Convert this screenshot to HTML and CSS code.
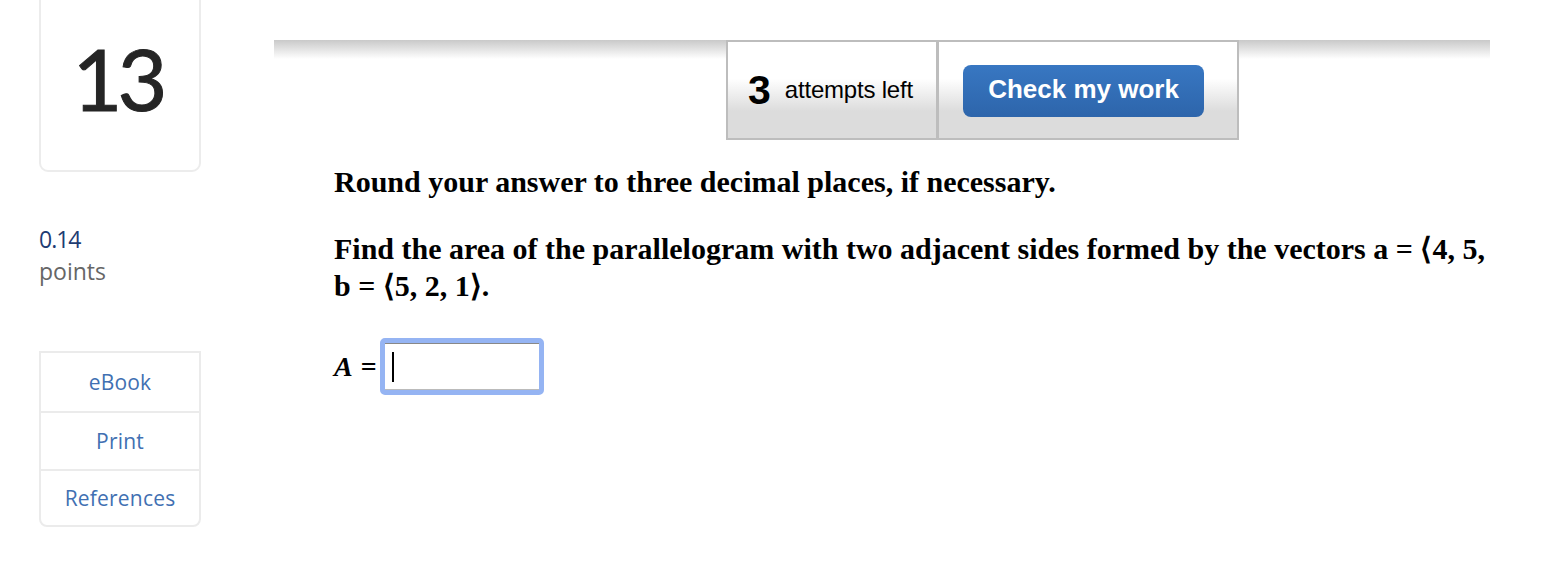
FILE: index.html
```html
<!DOCTYPE html>
<html>
<head>
<meta charset="utf-8">
<link rel="stylesheet" href="styles.css">
</head>
<body>
<div class="page">
  <aside class="side">
    <div class="qnum">13</div>
    <div class="points">
      <div class="pval">0.14</div>
      <div class="plabel">points</div>
    </div>
    <nav class="tools">
      <div class="tool">eBook</div>
      <div class="tool">Print</div>
      <div class="tool">References</div>
    </nav>
  </aside>
  <main class="main">
    <div class="toolbar">
      <div class="tbox attempts"><span class="num">3</span><span class="alabel">attempts left</span></div>
      <div class="tbox check"><button class="checkbtn">Check my work</button></div>
    </div>
    <div class="question">
      <p class="q">Round your answer to three decimal places, if necessary.</p>
      <p class="q">Find the area of the parallelogram with two adjacent sides formed by the vectors a = ⟨4, 5,<br>b = ⟨5, 2, 1⟩.</p>
      <div class="answer"><span class="var">A</span><span class="eq">=</span><span class="input"><span class="caret"></span></span></div>
    </div>
  </main>
</div>
</body>
</html>
```

FILE: styles.css
```css
html, body {
  margin: 0;
  padding: 0;
  background: #fff;
}
.page {
  display: flex;
  align-items: flex-start;
  width: 1548px;
  height: 584px;
  overflow: hidden;
}
.side {
  margin-left: 39px;
  width: 162px;
  display: flex;
  flex-direction: column;
  font-family: "Open Sans", "Noto Sans", sans-serif;
}
.qnum {
  box-sizing: border-box;
  height: 182px;
  margin-top: -10px;
  border: 2px solid #ececec;
  border-radius: 0 0 9px 9px;
  text-align: center;
  font-family: "Lato", "Open Sans", sans-serif;
  font-size: 86px;
  line-height: 1;
  padding-top: 43px;
  color: #252525;
  letter-spacing: -5px;
  text-indent: -5px;
  -webkit-text-stroke: 1px #252525;
}
.points {
  margin-top: 51px;
  font-size: 23px;
  line-height: 32px;
}
.pval {
  color: #1e3c72;
  letter-spacing: -1px;
}
.plabel {
  color: #666;
}
.tools {
  margin-top: 64px;
  border: 2px solid #ebebeb;
  border-radius: 0 0 8px 8px;
}
.tool {
  text-align: center;
  color: #4170b2;
  font-size: 21px;
  height: 58px;
  line-height: 58px;
  border-bottom: 2px solid #ebebeb;
  letter-spacing: 0.2px;
}
.tool:nth-child(2) {
  height: 56px;
  line-height: 56px;
}
.tool:last-child {
  border-bottom: 0;
  height: 54px;
  line-height: 54px;
}
.main {
  margin-left: 73px;
  width: 1216px;
  margin-top: 40px;
}
.toolbar {
  display: flex;
  padding-left: 452px;
  background: linear-gradient(#c9c9c9, #ffffff) no-repeat 0 0 / 100% 19px;
  font-family: "Liberation Sans", Arial, sans-serif;
}
.tbox {
  box-sizing: border-box;
  height: 100px;
  border: 2px solid #bdbdbd;
  background: linear-gradient(#ffffff 0%, #ffffff 38%, #dcdcdc 72%, #dcdcdc 100%);
  display: flex;
  align-items: center;
}
.attempts {
  width: 212px;
  padding-left: 20px;
}
.check {
  width: 301px;
  border-left-width: 1px;
  padding-left: 24px;
}
.num {
  font-weight: bold;
  font-size: 41px;
  margin-right: 14px;
  color: #000;
  line-height: 1;
}
.alabel {
  font-size: 24px;
  color: #000;
  letter-spacing: -0.2px;
}
.checkbtn {
  width: 241px;
  height: 52px;
  border: 0;
  border-radius: 8px;
  background: linear-gradient(#3877c2, #2d65ab);
  color: #fff;
  font-family: "Liberation Sans", Arial, sans-serif;
  font-weight: bold;
  font-size: 26px;
  padding: 0 0 3px 0;
  margin-top: 2px;
}
.question {
  padding-left: 60px;
  font-family: "Liberation Serif", "Times New Roman", serif;
  font-weight: bold;
  font-size: 30px;
  color: #000;
}
.q {
  margin: 0;
  line-height: 37px;
}
.q:first-child {
  margin-top: 23px;
  margin-bottom: 30px;
}
.answer {
  margin-top: 34px;
  display: flex;
  align-items: center;
}
.var {
  font-style: italic;
  font-size: 28px;
}
.eq {
  margin-left: 8px;
  margin-right: 3px;
  font-size: 28px;
}
.input {
  box-sizing: border-box;
  flex: 0 0 164px;
  width: 164px;
  height: 57px;
  border: 5px solid #95b4f3;
  border-radius: 5px;
  background: #fff;
  display: flex;
  align-items: center;
  padding-left: 7px;
  box-shadow: inset 0 -1px 0 #bbb, inset 0 1px 0 #888;
}
.caret {
  width: 2px;
  height: 30px;
  background: #000;
}
```
